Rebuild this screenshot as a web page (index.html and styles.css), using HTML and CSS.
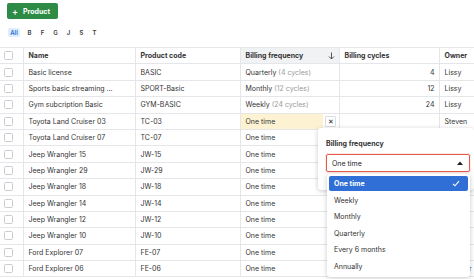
FILE: index.html
```html
<!DOCTYPE html>
<html>
<head>
<meta charset="utf-8">
<link rel="stylesheet" href="styles.css">
</head>
<body>
<div class="page">
  <div class="toolbar">
    <button class="add-btn"><span class="plus">+</span>Product</button>
  </div>
  <div class="filters">
    <span class="flt active">All</span>
    <span class="flt">B</span>
    <span class="flt">F</span>
    <span class="flt">G</span>
    <span class="flt">J</span>
    <span class="flt">S</span>
    <span class="flt">T</span>
  </div>
  <table class="grid">
    <colgroup>
      <col class="c-check"><col class="c-name"><col class="c-code"><col class="c-freq"><col class="c-cyc"><col class="c-owner">
    </colgroup>
    <thead>
      <tr>
        <th><span class="cb"></span></th>
        <th>Name</th>
        <th>Product code</th>
        <th class="sorted"><div class="th-flex"><span>Billing frequency</span><svg width="7" height="8" viewBox="0 0 7 8"><path d="M3.5 0.5v6.5M1 4.5l2.5 2.5 2.5-2.5" fill="none" stroke="#444" stroke-width="0.9"/></svg></div></th>
        <th>Billing cycles</th>
        <th>Owner</th>
      </tr>
    </thead>
    <tbody>
      <tr><td><span class="cb"></span></td><td>Basic license</td><td>BASIC</td><td>Quarterly <span class="muted">(4 cycles)</span></td><td class="num">4</td><td>Lissy</td></tr>
      <tr><td><span class="cb"></span></td><td>Sports basic streaming ...</td><td>SPORT-Basic</td><td>Monthly <span class="muted">(12 cycles)</span></td><td class="num">12</td><td>Lissy</td></tr>
      <tr><td><span class="cb"></span></td><td>Gym subcription Basic</td><td>GYM-BASIC</td><td>Weekly <span class="muted">(24 cycles)</span></td><td class="num">24</td><td>Lissy</td></tr>
      <tr><td><span class="cb"></span></td><td>Toyota Land Cruiser 03</td><td>TC-03</td><td class="editing"><div class="edit-flex"><span class="edit-val">One time</span><span class="edit-x"><span class="xbox">&#x2715;</span></span></div></td><td></td><td>Steven</td></tr>
      <tr><td><span class="cb"></span></td><td>Toyota Land Cruiser 07</td><td>TC-07</td><td>One time</td><td></td><td></td></tr>
      <tr><td><span class="cb"></span></td><td>Jeep Wrangler 15</td><td>JW-15</td><td>One time</td><td></td><td></td></tr>
      <tr><td><span class="cb"></span></td><td>Jeep Wrangler 29</td><td>JW-29</td><td>One time</td><td></td><td></td></tr>
      <tr><td><span class="cb"></span></td><td>Jeep Wrangler 18</td><td>JW-18</td><td>One time</td><td></td><td></td></tr>
      <tr><td><span class="cb"></span></td><td>Jeep Wrangler 14</td><td>JW-14</td><td>One time</td><td></td><td></td></tr>
      <tr><td><span class="cb"></span></td><td>Jeep Wrangler 12</td><td>JW-12</td><td>One time</td><td></td><td></td></tr>
      <tr><td><span class="cb"></span></td><td>Jeep Wrangler 10</td><td>JW-10</td><td>One time</td><td></td><td></td></tr>
      <tr><td><span class="cb"></span></td><td>Ford Explorer 07</td><td>FE-07</td><td>One time</td><td></td><td></td></tr>
      <tr><td><span class="cb"></span></td><td>Ford Explorer 06</td><td>FE-06</td><td>One time</td><td></td><td>Jennifer</td></tr>
    </tbody>
  </table>

  <div class="popover">
    <div class="pop-title">Billing frequency</div>
    <div class="select">
      <span>One time</span>
      <svg width="6" height="4" viewBox="0 0 6 4"><path d="M0 4L3 0.5 6 4z" fill="#222"/></svg>
    </div>
  </div>
  <div class="menu">
    <div class="opt selected"><span>One time</span><svg width="8" height="7" viewBox="0 0 8 7"><path d="M1 3.8l2 2L7 1.2" fill="none" stroke="#fff" stroke-width="1.1"/></svg></div>
    <div class="opt">Weekly</div>
    <div class="opt">Monthly</div>
    <div class="opt">Quarterly</div>
    <div class="opt">Every 6 months</div>
    <div class="opt">Annually</div>
  </div>
</div>
</body>
</html>
```

FILE: styles.css
```css
* { box-sizing: border-box; }
html, body { margin: 0; padding: 0; }
body {
  width: 474px;
  height: 279px;
  overflow: hidden;
  background: #fff;
  font-family: Inter, "Noto Sans", sans-serif;
  font-size: 7px;
  color: #333;
}
.page { position: relative; width: 474px; height: 279px; overflow: hidden; }

.toolbar { padding: 3px 0 0 7px; height: 27px; }
.add-btn {
  display: flex;
  align-items: center;
  height: 16px;
  width: 51px;
  padding: 0 0 0 5px;
  border: none;
  border-radius: 2px;
  background: #2e8b46;
  color: #fff;
  font-family: Inter, sans-serif;
  font-size: 7px;
  font-weight: 700;
}
.plus { font-size: 9px; font-weight: 600; margin-right: 5px; line-height: 1; }

.filters {
  display: flex;
  align-items: center;
  padding-left: 8px;
  height: 11px;
  font-size: 6px;
  font-weight: 600;
  color: #3a3a3a;
}
.flt { width: 13px; text-align: center; line-height: 9px; }
.flt.active {
  width: 12px;
  margin-right: 3px;
  background: #dfeeff;
  color: #2a6bd0;
  border-radius: 2px;
}

.grid {
  border-collapse: collapse;
  table-layout: fixed;
  width: 510px;
  margin-top: 9px;
}
.c-check { width: 23px; }
.c-name { width: 112px; }
.c-code { width: 105px; }
.c-freq { width: 99px; }
.c-cyc { width: 100px; }
.c-owner { width: 71px; }

.grid th, .grid td {
  height: 16.4px;
  padding: 0 0 0 5px;
  border: 1px solid #e4e6ea;
  text-align: left;
  white-space: nowrap;
  overflow: hidden;
  vertical-align: middle;
  line-height: 1;
}
.grid th:first-child, .grid td:first-child { border-left: none; padding: 0 0 0 4px; }
.grid th { font-weight: 700; color: #333; }
.grid th.sorted { background: #f1f2f4; }
.th-flex { display: flex; align-items: center; justify-content: space-between; padding-right: 4px; }
.muted { color: #9a9a9a; }
.num { text-align: right !important; padding-right: 4px !important; }

.cb {
  display: block;
  width: 9px;
  height: 9px;
  border: 1px solid #c9ccd1;
  border-radius: 1.5px;
  background: #fff;
}

.grid td.editing { padding: 0; }
.edit-flex { display: flex; height: 15.4px; align-items: stretch; }
.edit-val { flex: 1; background: #fdf3d3; padding-left: 5px; display: flex; align-items: center; }
.edit-x { width: 16px; display: flex; align-items: center; justify-content: center; background: #fff; }
.xbox {
  width: 11px; height: 11px;
  border: 1px solid #d9dce0;
  border-radius: 1px;
  display: flex; align-items: center; justify-content: center;
  font-size: 7px; color: #222;
}

.popover {
  position: absolute;
  left: 318px;
  top: 128px;
  width: 156px;
  height: 62px;
  background: #fff;
  border-radius: 3px;
  box-shadow: 0 1px 5px rgba(0,0,0,0.22);
  padding: 11px 4px 0 8px;
}
.pop-title { font-weight: 700; color: #333; height: 15px; }
.select {
  width: 144px;
  height: 18px;
  border: 1px solid #e25b4b;
  border-radius: 2px;
  display: flex;
  align-items: center;
  justify-content: space-between;
  padding: 0 6px 0 5px;
  color: #222;
  box-shadow: 0 0 0 1px rgba(226,91,75,0.15);
}

.menu {
  position: absolute;
  left: 327px;
  top: 174px;
  width: 143px;
  height: 103px;
  background: #fff;
  border-radius: 3px;
  box-shadow: 0 1px 5px rgba(0,0,0,0.22);
  padding: 2px 2px;
}
.opt {
  height: 16.5px;
  display: flex;
  align-items: center;
  justify-content: space-between;
  padding: 0 8px 0 5px;
  color: #333;
}
.opt.selected {
  background: #2f6fd6;
  color: #fff;
  font-weight: 700;
  border-radius: 2px;
  height: 15px;
  margin-bottom: 1px;
}
```
